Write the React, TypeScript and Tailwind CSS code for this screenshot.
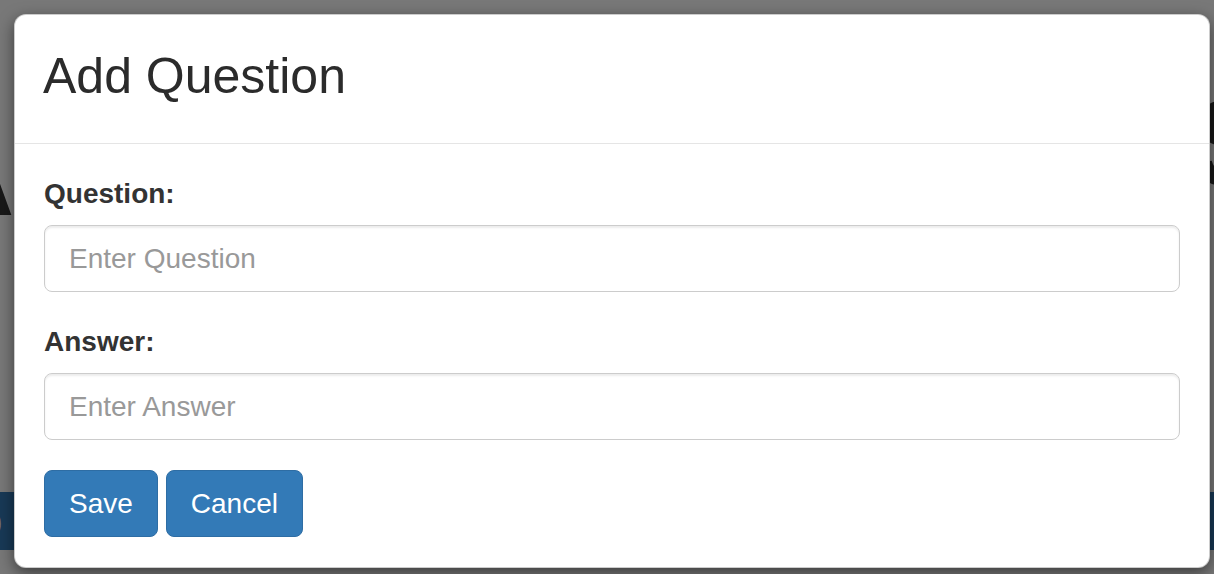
// Modal "Add Question" sobre a página escurecida
export default function App() {
  return (
    <div className="relative w-[1214px] h-[574px] overflow-hidden bg-white font-['Liberation_Sans',Arial,sans-serif]">
      {/* Página por trás do modal */}
      <div className="flex flex-col">
        <div className="flex justify-between pt-[80px] h-[430px]">
          <span className="-ml-[100px] text-[160px] font-bold leading-none text-[#333]">A</span>
          <span className="-mr-[60px] text-[125px] font-bold leading-none text-[#333]">S</span>
        </div>
        <div className="mt-[62px] h-[58px] bg-[#337ab7] flex items-center">
          <span className="-ml-[22px] text-[44px] text-white leading-none">o</span>
        </div>
      </div>

      {/* Backdrop */}
      <div className="absolute inset-0 bg-black/[0.53]" />

      {/* Modal */}
      <div className="absolute inset-0">
        <div className="ml-[14px] mt-[14px] w-[1196px] rounded-[12px] border border-black/20 bg-white shadow-[0_5px_15px_rgba(0,0,0,0.5)]">
          <div className="px-[28px] pt-[35px] pb-[40px] border-b border-[#e5e5e5]">
            <h4 className="text-[50px] leading-[53px] text-[#2b2b2b] font-normal">Add Question</h4>
          </div>
          <div className="px-[29px] pt-[30px] pb-[30px]">
            <div className="mb-[30px]">
              <label className="block mb-[11px] text-[28px] leading-[40px] font-bold text-[#333]">Question:</label>
              <input
                placeholder="Enter Question"
                className="block w-full h-[67px] rounded-[8px] border border-[#ccc] px-[24px] text-[28px] text-[#555] placeholder:text-[#999] shadow-[inset_0_2px_2px_rgba(0,0,0,0.075)] outline-none"
              />
            </div>
            <div className="mb-[30px]">
              <label className="block mb-[11px] text-[28px] leading-[40px] font-bold text-[#333]">Answer:</label>
              <input
                placeholder="Enter Answer"
                className="block w-full h-[67px] rounded-[8px] border border-[#ccc] px-[24px] text-[28px] text-[#555] placeholder:text-[#999] shadow-[inset_0_2px_2px_rgba(0,0,0,0.075)] outline-none"
              />
            </div>
            <div className="flex gap-[8px]">
              <button className="h-[67px] px-[24px] rounded-[8px] border border-[#2e6da4] bg-[#337ab7] text-[28px] text-white">Save</button>
              <button className="h-[67px] px-[24px] rounded-[8px] border border-[#2e6da4] bg-[#337ab7] text-[28px] text-white">Cancel</button>
            </div>
          </div>
        </div>
      </div>
    </div>
  );
}
